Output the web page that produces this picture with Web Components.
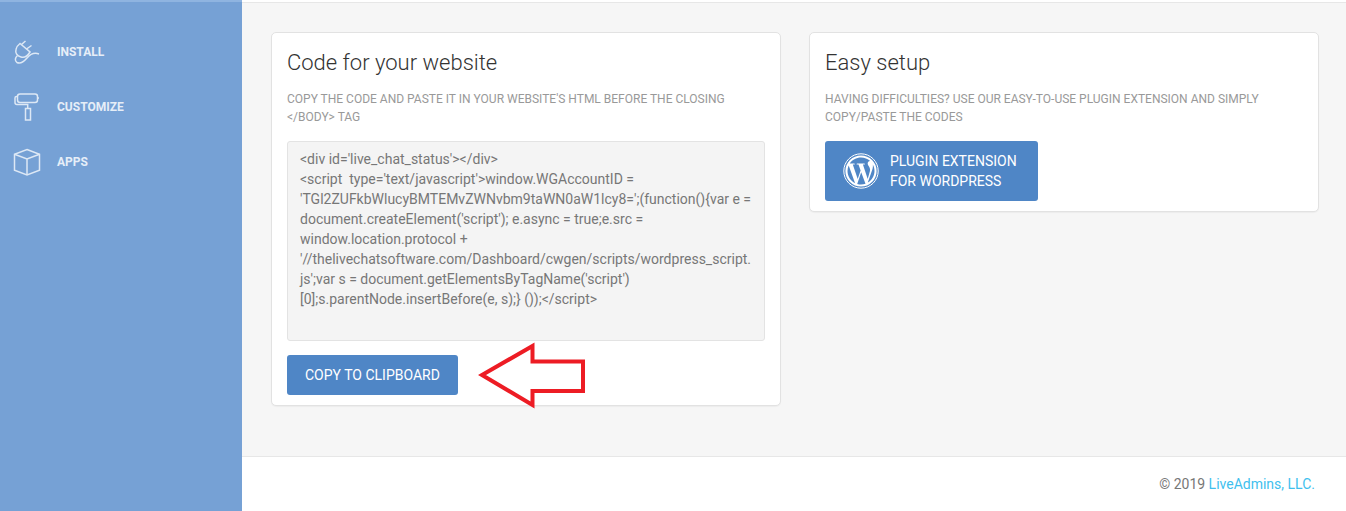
<!DOCTYPE html>
<html>
<head>
<meta charset="utf-8">
<title>Install</title>
<style>
    html, body { margin: 0; height: 100%; }
    body { font-family: Roboto, "Liberation Sans", sans-serif; overflow: hidden; }
</style>
</head>
<body>
<app-shell>
    <side-nav slot="nav">
        <nav-item label="INSTALL" icon="plug"></nav-item>
        <nav-item label="CUSTOMIZE" icon="roller"></nav-item>
        <nav-item label="APPS" icon="box"></nav-item>
    </side-nav>
    <info-card heading="Code for your website">
        <span slot="desc">Copy the code and paste it in your website's HTML before the closing &lt;/body&gt; tag</span>
        <code-box>&lt;div id='live_chat_status'&gt;&lt;/div&gt;<br>&lt;script&nbsp; type='text/javascript'&gt;window.WGAccountID = 'TGl2ZUFkbWlucyBMTEMvZWNvbm9taWN0aW1lcy8=';(function(){var e = document.createElement('script'); e.async = true;e.src = window.location.protocol + '//thelivechatsoftware.com/Dashboard/cwgen/scripts/wordpress_script.js';var s = document.getElementsByTagName('script')[0];s.parentNode.insertBefore(e, s);} ());&lt;/script&gt;</code-box>
        <action-button>COPY TO CLIPBOARD</action-button>
        <arrow-mark></arrow-mark>
    </info-card>
    <info-card heading="Easy setup">
        <span slot="desc">Having difficulties? Use our easy-to-use plugin extension and simply copy/paste the codes</span>
        <action-button wp>PLUGIN EXTENSION<br>FOR WORDPRESS</action-button>
    </info-card>
    <page-footer slot="footer"></page-footer>
</app-shell>

<script>
const NAV_ICONS = {
    plug: `<path d="M20 9.500L30 18C27.500 22 24 24 21 23C17 22 15 19 16 15.500C16.500 13 18 11 20 9.500z"/>
           <path d="M21.500 10.500L25.500 7M26.500 15L31.500 11.500"/>
           <path d="M17.500 21.500C15 23.500 14.500 27 17 28.500C20 30 24 27.500 27 24C30 20.500 33.500 18 39 20"/>`,
    roller: `<rect x="17.500" y="5" width="20" height="8.500" rx="2.500"/>
             <path d="M37.500 9h1.500"/>
             <path d="M17.500 7.500h-1c-1 0-1.500.5-1.500 1.500v4.500c0 1.300.7 2 2 2h10.700v4"/>
             <rect x="25.500" y="19.500" width="5" height="11.500"/>`,
    box: `<path d="M27 5.500l12.500 4.700v16.100L27 31l-12.500-4.700V10.200z"/>
          <path d="M14.500 10.200L27 15l12.500-4.800M27 15v16"/>`
};

class AppShell extends HTMLElement {
    constructor() {
        super();
        this.attachShadow({mode: 'open'});
        this.shadowRoot.innerHTML = `
        <style>
            :host {
                display: grid;
                grid-template-columns: 242px 1fr;
                height: 511px;
            }
            .main {
                display: flex;
                flex-direction: column;
                background: #f6f6f6;
                border-top: 2px solid #fff;
                box-sizing: border-box;
            }
            .content {
                flex: 1;
                display: grid;
                grid-template-columns: 510px 510px;
                align-items: start;
                column-gap: 28px;
                padding: 29px 0 0 29px;
                border-top: 1px solid #e7e7e7;
            }
        </style>
        <slot name="nav"></slot>
        <div class="main">
            <div class="content"><slot></slot></div>
            <slot name="footer"></slot>
        </div>
        `;
    }
}

class SideNav extends HTMLElement {
    constructor() {
        super();
        this.attachShadow({mode: 'open'});
        this.shadowRoot.innerHTML = `
        <style>
            :host {
                display: flex;
                flex-direction: column;
                background: #76a1d5;
                border-top: 2px solid #8fb4e0;
                padding-top: 22px;
            }
        </style>
        <slot></slot>
        `;
    }
}

class NavItem extends HTMLElement {
    constructor() {
        super();
        this.attachShadow({mode: 'open'});
        const icon = NAV_ICONS[this.getAttribute('icon')];
        this.shadowRoot.innerHTML = `
        <style>
            :host {
                display: flex;
                align-items: center;
                height: 55px;
                color: #e6eef8;
                font: 700 12px Roboto, sans-serif;
            }
            svg {
                width: 54px;
                height: 36px;
                margin-right: 3px;
                fill: none;
                stroke: #dde8f5;
                stroke-width: 1.500;
                flex: none;
            }
        </style>
        <svg viewBox="0 0 54 36">${icon}</svg>
        <span>${this.getAttribute('label')}</span>
        `;
    }
}

class InfoCard extends HTMLElement {
    constructor() {
        super();
        this.attachShadow({mode: 'open'});
        this.shadowRoot.innerHTML = `
        <style>
            :host {
                display: block;
                position: relative;
                box-sizing: border-box;
                background: #fff;
                border: 1px solid #e2e2e2;
                border-radius: 5px;
                box-shadow: 0 1px 1px rgba(0,0,0,0.04);
                padding: 15px 15px 10px;
            }
            h2 {
                margin: 0 0 12px;
                font: 300 22px/30px Roboto, sans-serif;
                color: #333;
            }
            .desc {
                font: 400 12px/18px Roboto, sans-serif;
                color: #999;
                text-transform: uppercase;
                margin-bottom: 15px;
            }
        </style>
        <h2>${this.getAttribute('heading')}</h2>
        <div class="desc"><slot name="desc"></slot></div>
        <slot></slot>
        `;
    }
}

class CodeBox extends HTMLElement {
    constructor() {
        super();
        this.attachShadow({mode: 'open'});
        this.shadowRoot.innerHTML = `
        <style>
            :host {
                display: block;
                box-sizing: border-box;
                height: 200px;
                margin-bottom: 14px;
                padding: 7px 12px;
                background: #f4f4f4;
                border: 1px solid #e3e3e3;
                border-radius: 3px;
                font: 400 14px/20px Roboto, sans-serif;
                color: #777;
                overflow-wrap: break-word;
            }
        </style>
        <slot></slot>
        `;
    }
}

class ActionButton extends HTMLElement {
    constructor() {
        super();
        this.attachShadow({mode: 'open'});
        const wp = this.hasAttribute('wp');
        this.shadowRoot.innerHTML = `
        <style>
            :host {
                display: inline-flex;
                align-items: center;
                box-sizing: border-box;
                height: ${wp ? 60 : 40}px;
                padding: 0 ${wp ? 21 : 18}px 0 18px;
                gap: 11px;
                background: #4f86c6;
                border-radius: 3px;
                color: #fff;
                font: 400 14px/20px Roboto, sans-serif;
            }
            svg { width: 36px; height: 36px; flex: none; }
        </style>
        ${wp ? `<svg viewBox="0 0 36 36">
            <circle cx="18" cy="18" r="17.200" fill="none" stroke="#fff" stroke-width="1"/>
            <circle cx="18" cy="18" r="15.600" fill="#fff"/>
            <path fill="#4f86c6" d="M4.500 18c0 5.300 3.100 10 7.600 12.200L5.700 12.500c-.8 1.700-1.200 3.600-1.200 5.500zM27.100 17.300c0-1.700-.6-2.800-1.100-3.700-.7-1.100-1.300-2-1.300-3.100 0-1.200.9-2.400 2.300-2.400h.2C24.700 5.800 21.500 4.500 18 4.500c-4.700 0-8.900 2.400-11.300 6.100h.9c1.400 0 3.600-.2 3.600-.2.700 0 .8 1 .1 1.100 0 0-.7.1-1.500.1l4.900 14.500 2.900-8.700-2.100-5.800c-.7 0-1.400-.1-1.400-.1-.7 0-.6-1.100.1-1.100 0 0 2.200.2 3.500.2 1.400 0 3.600-.2 3.600-.2.700 0 .8 1 .1 1.100 0 0-.7.1-1.500.1l4.800 14.400 1.300-4.500c.6-1.900 1-3.200 1-4.400zM18.200 19.200l-4 11.700c1.200.4 2.500.6 3.800.6 1.600 0 3.100-.3 4.500-.8l-.1-.2zM29.800 11.500c.1.400.1.900.1 1.400 0 1.400-.3 2.900-1 4.800l-4.100 11.900c4-2.300 6.700-6.700 6.700-11.600 0-2.400-.6-4.500-1.700-6.500z"/>
        </svg>` : ''}
        <span><slot></slot></span>
        `;
    }
}

class ArrowMark extends HTMLElement {
    constructor() {
        super();
        this.attachShadow({mode: 'open'});
        this.shadowRoot.innerHTML = `
        <style>
            :host {
                position: absolute;
                left: 205px;
                top: 307px;
                width: 112px;
                height: 70px;
            }
            svg { display: block; }
        </style>
        <svg width="112" height="70" viewBox="0 0 112 70">
            <path d="M5 35L55.500 6V21.500H106V51H55.500V65z" fill="none" stroke="#ed1c24" stroke-width="4"/>
        </svg>
        `;
    }
}

class PageFooter extends HTMLElement {
    constructor() {
        super();
        this.attachShadow({mode: 'open'});
        this.shadowRoot.innerHTML = `
        <style>
            :host {
                display: flex;
                justify-content: flex-end;
                align-items: center;
                box-sizing: border-box;
                height: 55px;
                padding-right: 31px;
                background: #fff;
                border-top: 1px solid #e7e7e7;
                font: 400 14px Roboto, sans-serif;
                color: #777;
            }
            a { color: #3fbfee; text-decoration: none; }
        </style>
        <span>© 2019 <a href="#">LiveAdmins, LLC.</a></span>
        `;
    }
}

customElements.define('app-shell', AppShell);
customElements.define('side-nav', SideNav);
customElements.define('nav-item', NavItem);
customElements.define('info-card', InfoCard);
customElements.define('code-box', CodeBox);
customElements.define('action-button', ActionButton);
customElements.define('arrow-mark', ArrowMark);
customElements.define('page-footer', PageFooter);
</script>
</body>
</html>
